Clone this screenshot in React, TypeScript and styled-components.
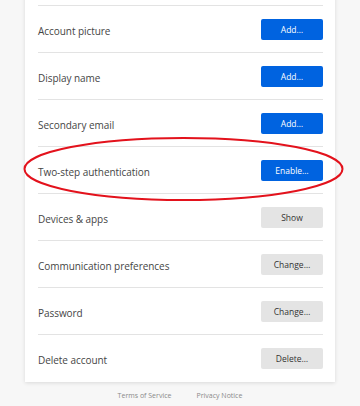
import React from 'react';
import styled, {createGlobalStyle} from 'styled-components';

const GlobalStyle = createGlobalStyle`
  html, body {
    margin: 0;
    padding: 0;
    background: #f7f7f7;
    font-family: "Open Sans", "Noto Sans", sans-serif;
  }
`;

type Setting = {
  label: string;
  action: string;
  primary?: boolean;
};

const settings: Setting[] = [
  {label: 'Account picture', action: 'Add…', primary: true},
  {label: 'Display name', action: 'Add…', primary: true},
  {label: 'Secondary email', action: 'Add…', primary: true},
  {label: 'Two-step authentication', action: 'Enable…', primary: true},
  {label: 'Devices & apps', action: 'Show'},
  {label: 'Communication preferences', action: 'Change…'},
  {label: 'Password', action: 'Change…'},
  {label: 'Delete account', action: 'Delete…'},
];

export default function App() {
  return (
    <>
      <GlobalStyle/>
      <Page>
        <Card>
          {settings.map(s => (
            <Row key={s.label}>
              <Label>{s.label}</Label>
              <ActionButton $primary={s.primary}>{s.action}</ActionButton>
            </Row>
          ))}
        </Card>
        <Footer>
          <FooterLink>Terms of Service</FooterLink>
          <FooterLink>Privacy Notice</FooterLink>
        </Footer>
        <Highlight viewBox="0 0 360 406" aria-hidden>
          <ellipse cx="183.5" cy="169" rx="159" ry="31" fill="none" stroke="#e3121c" strokeWidth="2"/>
        </Highlight>
      </Page>
    </>
  );
}

const Page = styled.div`
  position: relative;
  width: 360px;
  height: 406px;
  overflow: hidden;
  display: flex;
  flex-direction: column;
  align-items: center;
`;

const Card = styled.div`
  box-sizing: border-box;
  width: 310px;
  margin-top: -20px;
  padding: 25px 12px 1px 13px;
  background: #fff;
  box-shadow: 0 1px 4px rgba(0, 0, 0, 0.12);
`;

const Row = styled.div`
  display: flex;
  align-items: center;
  justify-content: space-between;
  height: 46px;
  border-top: 1px solid #e3e3e3;
`;

const Label = styled.span`
  padding-top: 3px;
  font-size: 10px;
  letter-spacing: -0.05px;
  color: #454545;
`;

const ActionButton = styled.button<{$primary?: boolean}>`
  box-sizing: border-box;
  width: 62px;
  height: 21px;
  padding: 0;
  border: none;
  border-radius: 2px;
  font-family: "Open Sans", "Noto Sans", sans-serif;
  font-size: 8.5px;
  color: ${p => p.$primary ? '#fff' : '#333'};
  background: ${p => p.$primary ? '#0063e0' : '#e4e4e4'};
`;

const Footer = styled.div`
  display: flex;
  gap: 25px;
  margin-top: 9px;
`;

const FooterLink = styled.span`
  font-size: 7px;
  color: #8a8a8a;
`;

const Highlight = styled.svg`
  position: absolute;
  left: 0;
  top: 0;
  width: 360px;
  height: 406px;
  pointer-events: none;
`;
